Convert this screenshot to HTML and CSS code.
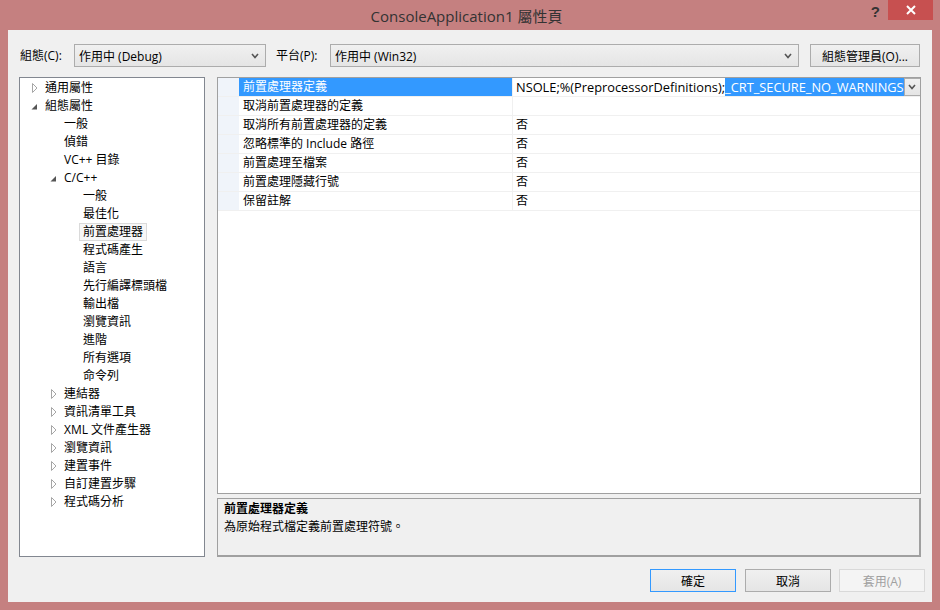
FILE: index.html
```html
<!DOCTYPE html>
<html lang="zh-Hant">
<head>
<meta charset="utf-8">
<title>ConsoleApplication1 屬性頁</title>
<link rel="stylesheet" href="styles.css">
</head>
<body>
<div class="window">
  <div class="titlebar">
    <div class="title">ConsoleApplication1 屬性頁</div>
    <div class="caption">
      <span class="help">?</span>
      <span class="close"><svg width="10" height="10" viewBox="0 0 10 10"><path d="M1 1 L9 9 M9 1 L1 9" stroke="#fff" stroke-width="2" fill="none"/></svg></span>
    </div>
  </div>
  <div class="client">
    <div class="toprow">
      <span class="lbl">組態(C):</span>
      <div class="combo combo-cfg"><span>作用中 (Debug)</span><svg class="chev" width="8" height="6" viewBox="0 0 8 6"><path d="M1 1 L4 4.5 L7 1" stroke="#555" stroke-width="1.6" fill="none"/></svg></div>
      <span class="lbl">平台(P):</span>
      <div class="combo combo-plat"><span>作用中 (Win32)</span><svg class="chev" width="8" height="6" viewBox="0 0 8 6"><path d="M1 1 L4 4.5 L7 1" stroke="#555" stroke-width="1.6" fill="none"/></svg></div>
      <div class="btn btn-cfgmgr">組態管理員(O)...</div>
    </div>
    <div class="main">
      <div class="tree">
        <div class="node l0"><span class="tw"><svg width="16" height="18" viewBox="0 0 16 18"><path d="M3.5 4.5 L8 9 L3.5 13.5 Z" fill="none" stroke="#a6a6a6"/></svg></span><span class="txt">通用屬性</span></div>
        <div class="node l0"><span class="tw"><svg width="16" height="18" viewBox="0 0 16 18"><path d="M8 7 L8 12.5 L2.5 12.5 Z" fill="#555"/></svg></span><span class="txt">組態屬性</span></div>
        <div class="node l1"><span class="tw"></span><span class="txt">一般</span></div>
        <div class="node l1"><span class="tw"></span><span class="txt">偵錯</span></div>
        <div class="node l1"><span class="tw"></span><span class="txt">VC++ 目錄</span></div>
        <div class="node l1"><span class="tw"><svg width="16" height="18" viewBox="0 0 16 18"><path d="M8 7 L8 12.5 L2.5 12.5 Z" fill="#555"/></svg></span><span class="txt">C/C++</span></div>
        <div class="node l2"><span class="tw"></span><span class="txt">一般</span></div>
        <div class="node l2"><span class="tw"></span><span class="txt">最佳化</span></div>
        <div class="node l2"><span class="tw"></span><span class="txt sel">前置處理器</span></div>
        <div class="node l2"><span class="tw"></span><span class="txt">程式碼產生</span></div>
        <div class="node l2"><span class="tw"></span><span class="txt">語言</span></div>
        <div class="node l2"><span class="tw"></span><span class="txt">先行編譯標頭檔</span></div>
        <div class="node l2"><span class="tw"></span><span class="txt">輸出檔</span></div>
        <div class="node l2"><span class="tw"></span><span class="txt">瀏覽資訊</span></div>
        <div class="node l2"><span class="tw"></span><span class="txt">進階</span></div>
        <div class="node l2"><span class="tw"></span><span class="txt">所有選項</span></div>
        <div class="node l2"><span class="tw"></span><span class="txt">命令列</span></div>
        <div class="node l1"><span class="tw"><svg width="16" height="18" viewBox="0 0 16 18"><path d="M3.5 4.5 L8 9 L3.5 13.5 Z" fill="none" stroke="#a6a6a6"/></svg></span><span class="txt">連結器</span></div>
        <div class="node l1"><span class="tw"><svg width="16" height="18" viewBox="0 0 16 18"><path d="M3.5 4.5 L8 9 L3.5 13.5 Z" fill="none" stroke="#a6a6a6"/></svg></span><span class="txt">資訊清單工具</span></div>
        <div class="node l1"><span class="tw"><svg width="16" height="18" viewBox="0 0 16 18"><path d="M3.5 4.5 L8 9 L3.5 13.5 Z" fill="none" stroke="#a6a6a6"/></svg></span><span class="txt">XML 文件產生器</span></div>
        <div class="node l1"><span class="tw"><svg width="16" height="18" viewBox="0 0 16 18"><path d="M3.5 4.5 L8 9 L3.5 13.5 Z" fill="none" stroke="#a6a6a6"/></svg></span><span class="txt">瀏覽資訊</span></div>
        <div class="node l1"><span class="tw"><svg width="16" height="18" viewBox="0 0 16 18"><path d="M3.5 4.5 L8 9 L3.5 13.5 Z" fill="none" stroke="#a6a6a6"/></svg></span><span class="txt">建置事件</span></div>
        <div class="node l1"><span class="tw"><svg width="16" height="18" viewBox="0 0 16 18"><path d="M3.5 4.5 L8 9 L3.5 13.5 Z" fill="none" stroke="#a6a6a6"/></svg></span><span class="txt">自訂建置步驟</span></div>
        <div class="node l1"><span class="tw"><svg width="16" height="18" viewBox="0 0 16 18"><path d="M3.5 4.5 L8 9 L3.5 13.5 Z" fill="none" stroke="#a6a6a6"/></svg></span><span class="txt">程式碼分析</span></div>
      </div>
      <div class="right">
        <div class="grid">
          <div class="prow selrow">
            <div class="gut"></div>
            <div class="pname">前置處理器定義</div>
            <div class="pval">
              <span class="valtext">NSOLE;%(PreprocessorDefinitions);</span><span class="hl">_CRT_SECURE_NO_WARNINGS</span>
              <div class="dd"><svg width="8" height="6" viewBox="0 0 8 6"><path d="M1 1 L4 4.5 L7 1" stroke="#555" stroke-width="1.6" fill="none"/></svg></div>
            </div>
          </div>
          <div class="prow"><div class="gut"></div><div class="pname">取消前置處理器的定義</div><div class="pval"></div></div>
          <div class="prow"><div class="gut"></div><div class="pname">取消所有前置處理器的定義</div><div class="pval">否</div></div>
          <div class="prow"><div class="gut"></div><div class="pname">忽略標準的 Include 路徑</div><div class="pval">否</div></div>
          <div class="prow"><div class="gut"></div><div class="pname">前置處理至檔案</div><div class="pval">否</div></div>
          <div class="prow"><div class="gut"></div><div class="pname">前置處理隱藏行號</div><div class="pval">否</div></div>
          <div class="prow"><div class="gut"></div><div class="pname">保留註解</div><div class="pval">否</div></div>
        </div>
        <div class="desc">
          <div class="desc-title">前置處理器定義</div>
          <div class="desc-text">為原始程式檔定義前置處理符號。</div>
        </div>
      </div>
    </div>
    <div class="buttons">
      <div class="btn btn-ok">確定</div>
      <div class="btn btn-cancel">取消</div>
      <div class="btn btn-apply">套用(A)</div>
    </div>
  </div>
</div>
</body>
</html>
```
FILE: styles.css
```css
* { box-sizing: border-box; }
html, body { margin: 0; padding: 0; }
body {
  width: 940px;
  height: 610px;
  overflow: hidden;
  background: #c58080;
  font-family: "Open Sans", "Noto Sans CJK TC", sans-serif;
  font-size: 12px;
  color: #000;
}
.window {
  display: flex;
  flex-direction: column;
  height: 610px;
}
.titlebar {
  height: 30px;
  display: grid;
  grid-template-columns: 1fr auto 1fr;
  align-items: start;
  padding-right: 7px;
}
.title {
  grid-column: 2;
  font-size: 15px;
  color: #333;
  line-height: 32px;
  white-space: nowrap;
}
.caption {
  grid-column: 3;
  justify-self: end;
  display: flex;
  align-items: flex-start;
}
.help {
  font-family: "Liberation Sans", sans-serif;
  font-weight: bold;
  font-size: 15px;
  color: #333;
  line-height: 24px;
  margin-right: 8px;
}
.close {
  width: 45px;
  height: 20px;
  background: #c75050;
  display: flex;
  align-items: center;
  justify-content: center;
}
.client {
  flex: 1;
  margin: 0 8px 8px;
  background: #f0f0f0;
  display: flex;
  flex-direction: column;
}
.toprow {
  display: flex;
  align-items: center;
  padding: 14px 0 0 12px;
}
.lbl {
  width: 54px;
  line-height: 23px;
}
.combo {
  height: 23px;
  border: 1px solid #acacac;
  background: linear-gradient(#f0f0f0, #e5e5e5);
  display: flex;
  align-items: center;
  justify-content: space-between;
  padding: 0 6px 0 4px;
}
.combo-cfg { width: 192px; margin-right: 10px; }
.combo-plat { width: 469px; margin-right: 11px; }
.btn {
  height: 23px;
  border: 1px solid #acacac;
  background: linear-gradient(#f0f0f0, #e5e5e5);
  display: flex;
  align-items: center;
  justify-content: center;
}
.btn-cfgmgr { width: 110px; }
.main {
  display: flex;
  gap: 12px;
  margin-top: 10px;
  padding-left: 11px;
  height: 480px;
}
.tree {
  width: 186px;
  border: 1px solid #828790;
  background: #fff;
  padding-top: 1px;
}
.node {
  display: flex;
  align-items: center;
  height: 18px;
  white-space: nowrap;
}
.node.l0 { padding-left: 9px; }
.node.l1 { padding-left: 28px; }
.node.l2 { padding-left: 47px; }
.tw {
  width: 16px;
  height: 18px;
  flex: none;
  display: flex;
}
.txt { line-height: 16px; }
.txt.sel {
  margin-left: -4px;
  padding: 0 3px;
  border: 1px solid #dadada;
  background: #f7f7f7;
}
.right {
  width: 704px;
  display: flex;
  flex-direction: column;
  gap: 4px;
}
.grid {
  height: 417px;
  border: 1px solid #a0a0a0;
  background: #fff;
}
.prow {
  display: grid;
  grid-template-columns: 21px 274px 1fr;
  height: 19px;
  border-bottom: 1px solid #f0f0f0;
}
.gut { background: #f0f4fa; }
.pname {
  padding-left: 4px;
  line-height: 18px;
  border-right: 1px solid #f0f0f0;
  white-space: nowrap;
}
.pval {
  padding-left: 3px;
  line-height: 18px;
  white-space: nowrap;
  overflow: hidden;
  display: flex;
}
.selrow .pname {
  background: #3399ff;
  color: #fff;
}
.selrow .pval {
  font-size: 12.8px;
}
.valtext { flex: none; }
.hl {
  flex: none;
  background: #3399ff;
  color: #fff;
}
.dd {
  width: 17px;
  height: 18px;
  flex: none;
  margin-left: auto;
  border: 1px solid #acacac;
  background: linear-gradient(#f0f0f0, #e5e5e5);
  display: flex;
  align-items: center;
  justify-content: center;
}
.desc {
  flex: 1;
  border: 1px solid #a0a0a0;
  border-right-width: 2px;
  border-bottom-width: 2px;
  background: #f0f0f0;
  padding: 1px 6px;
}
.desc-title {
  font-weight: bold;
  line-height: 18px;
}
.desc-text { line-height: 18px; }
.buttons {
  display: flex;
  justify-content: flex-end;
  margin-top: 12px;
  padding-right: 7px;
}
.btn-ok, .btn-cancel, .btn-apply { width: 86px; }
.btn-ok { border-color: #3399ff; margin-right: 9px; }
.btn-cancel { margin-right: 8px; }
.btn-apply {
  border-color: #d9d9d9;
  background: #f4f4f4;
  color: #a0a0a0;
}
```
